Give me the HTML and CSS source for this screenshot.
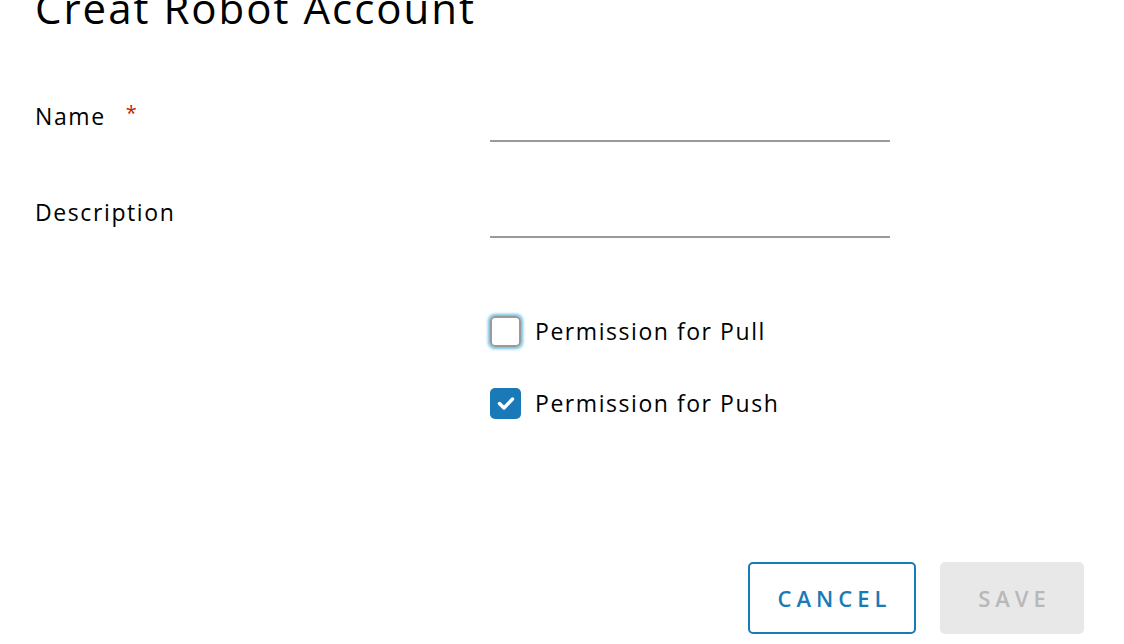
FILE: index.html
```html
<!DOCTYPE html>
<html>
<head>
<meta charset="utf-8">
<link rel="stylesheet" href="styles.css">
</head>
<body>
<div class="modal">
  <h1 class="title">Creat Robot Account</h1>
  <form class="form">
    <div class="row">
      <label class="label">Name<span class="req">*</span></label>
      <div class="input"></div>
    </div>
    <div class="row">
      <label class="label">Description</label>
      <div class="input"></div>
    </div>
    <div class="checks">
      <div class="check">
        <span class="box focus"></span>
        <span class="check-label">Permission for Pull</span>
      </div>
      <div class="check">
        <span class="box checked">
          <svg viewBox="0 0 30 30" width="30" height="30"><path d="M8.5 15.5 L13 20 L21.5 11" fill="none" stroke="#fff" stroke-width="3.4" stroke-linecap="round" stroke-linejoin="round"/></svg>
        </span>
        <span class="check-label">Permission for Push</span>
      </div>
    </div>
  </form>
  <div class="footer">
    <button class="btn btn-outline" type="button">CANCEL</button>
    <button class="btn btn-disabled" type="button">SAVE</button>
  </div>
</div>
</body>
</html>
```

FILE: styles.css
```css
html, body {
  margin: 0;
  padding: 0;
  background: #fff;
  overflow: hidden;
}
body {
  width: 1124px;
  height: 644px;
  font-family: "Open Sans", "Noto Sans", sans-serif;
  color: #000;
}
.modal {
  padding: 0 40px 0 35px;
}
.title {
  margin: -22px 0 0 0;
  font-size: 42px;
  font-weight: 400;
  line-height: 60px;
  letter-spacing: 2px;
  white-space: nowrap;
}
.form {
  margin-top: 62px;
}
.row {
  display: flex;
  height: 96px;
}
.label {
  width: 455px;
  font-size: 23px;
  line-height: 32px;
  letter-spacing: 1.6px;
}
.req {
  color: #c92100;
  font-size: 20px;
  margin-left: 20px;
  position: relative;
  top: -5px;
}
.input {
  width: 400px;
  height: 40px;
  border-bottom: 2px solid #9a9a9a;
}
.checks {
  margin-left: 455px;
  padding-top: 24px;
  display: flex;
  flex-direction: column;
  gap: 42px;
}
.check {
  display: flex;
  align-items: center;
  height: 30px;
}
.box {
  width: 31px;
  height: 31px;
  box-sizing: border-box;
  border-radius: 5px;
  display: flex;
  align-items: center;
  justify-content: center;
}
.box.focus {
  border: 2px solid #9a9a9a;
  box-shadow: 0 0 3px 2px #6bc1e3;
}
.box.checked {
  background: #1a7ab8;
}
.check-label {
  margin-left: 14px;
  font-size: 23px;
  letter-spacing: 1.55px;
}
.footer {
  display: flex;
  justify-content: flex-end;
  gap: 24px;
  margin-top: 144px;
}
.btn {
  height: 72px;
  border-radius: 5px;
  font-family: "Open Sans", "Noto Sans", sans-serif;
  font-size: 22px;
  font-weight: 600;
  letter-spacing: 5px;
  padding: 0 0 0 5px;
}
.btn-outline {
  width: 168px;
  background: #fff;
  border: 2px solid #1a7ab8;
  color: #1a7ab8;
}
.btn-disabled {
  width: 144px;
  background: #e8e8e8;
  border: none;
  color: #b8b8b8;
}
```
